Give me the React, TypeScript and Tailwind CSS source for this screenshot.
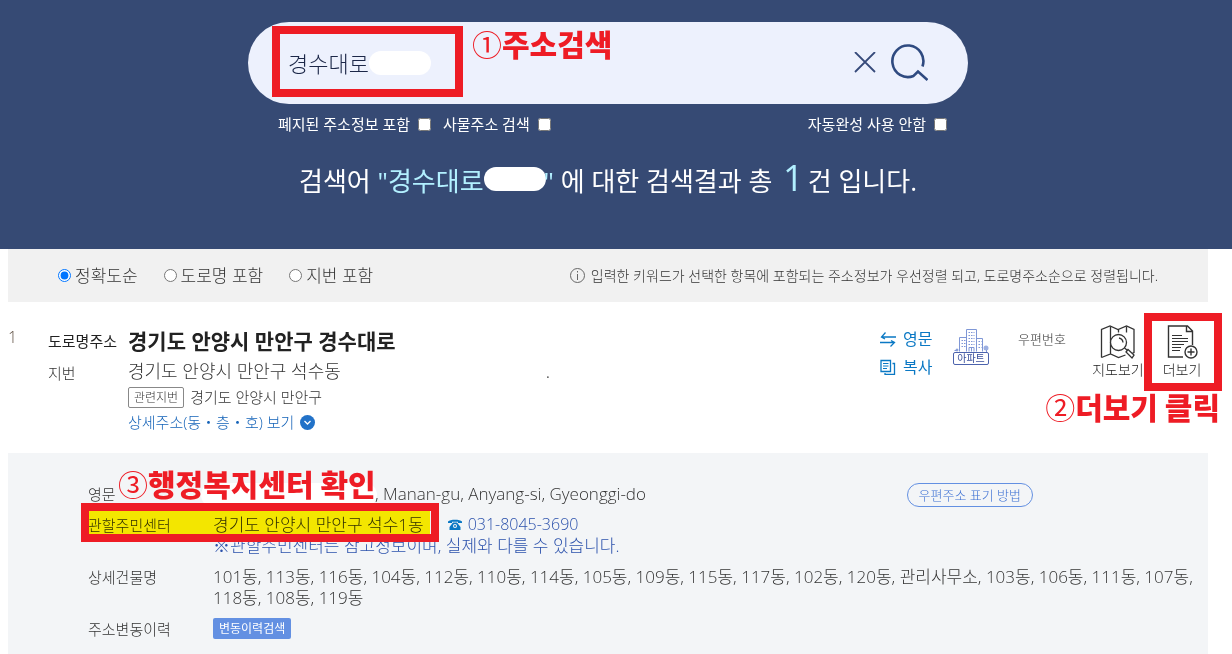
import React, { useState } from "react";
import { clsx } from "clsx";

const buildings =
  "101동, 113동, 116동, 104동, 112동, 110동, 114동, 105동, 109동, 115동, 117동, 102동, 120동, 관리사무소, 103동, 106동, 111동, 107동, 118동, 108동, 119동";

const sortOptions = [
  { id: "accuracy", label: "정확도순" },
  { id: "road", label: "도로명 포함" },
  { id: "jibun", label: "지번 포함" },
];

export default function App() {
  return (
    <div className="min-h-screen bg-white font-['Open_Sans','Noto_Sans_CJK_KR',sans-serif] text-[#333]">
      <SearchHeader />
      <main className="pl-2 pr-6">
        <SortBar />
        <ResultItem />
        <ResultDetail />
      </main>
    </div>
  );
}

function SearchHeader() {
  const [keyword, setKeyword] = useState("경수대로");

  return (
    <header className="bg-[#364a74] pt-[22px] pb-[51px] pl-2 pr-6 text-white">
      <div className="mx-auto max-w-[720px]">
        <form
          className="relative flex h-[82px] items-center rounded-full bg-[#edf1fd] pl-10 pr-10"
          onSubmit={(e) => e.preventDefault()}
        >
          <input
            type="text"
            aria-label="주소 검색어"
            className="min-w-0 flex-1 bg-transparent text-[22px] font-light text-[#1c2748] outline-none"
            value={keyword}
            onChange={(e) => setKeyword(e.target.value)}
          />
          <Mask className="absolute left-[121px] top-[29px]" />
          <button type="button" aria-label="지우기" className="mr-3.5">
            <svg width="22" height="22" viewBox="0 0 22 22" fill="none" stroke="#364a7a" strokeWidth="1.8">
              <path d="M1 0l20 20M21 0L1 20" />
            </svg>
          </button>
          <button type="submit" aria-label="검색">
            <svg width="38" height="38" viewBox="0 0 38 38" fill="none" stroke="#2f4a80" strokeWidth="2.6">
              <path d="M32.500 22.500A15.500 15.800 0 1 0 23.500 32L28 27.500L37.500 36" />
            </svg>
          </button>
          <RedBox className="left-6 top-1 h-[71px] w-[191px]" />
          <Callout no="①" text="주소검색" className="left-56 top-px" />
        </form>
        <div className="flex h-10 items-center gap-3 pl-[30px] pr-[21px] text-[15px]">
          <Check id="closed" label="폐지된 주소정보 포함" />
          <Check id="object" label="사물주소 검색" />
          <Check id="auto" label="자동완성 사용 안함" className="ml-auto" />
        </div>
      </div>
      <h1 className="mt-4 flex h-[38px] items-baseline justify-center whitespace-pre text-[26px] leading-[38px]">
        검색어 <span className="text-[#b2f0ff]">"경수대로</span>
        <Mask className="self-center" />
        <span className="-ml-0.5 text-[#b2f0ff]">"</span> 에 대한 검색결과 총{" "}
        <strong className="mx-1 text-4xl font-normal leading-none text-[#b2f0ff]">1</strong>건 입니다.
      </h1>
    </header>
  );
}

function Check({ id, label, className }: { id: string; label: string; className?: string }) {
  return (
    <span className={clsx("flex items-center gap-2", className)}>
      <label htmlFor={id}>{label}</label>
      <input id={id} type="checkbox" className="size-[13px]" />
    </span>
  );
}

function SortBar() {
  const [sort, setSort] = useState("accuracy");

  return (
    <div className="flex h-[53px] items-center justify-between bg-[#f1f1f1] pl-[50px] pr-[50px]">
      <div className="flex gap-[26px]">
        {sortOptions.map((o) => (
          <label key={o.id} className="flex items-center gap-1 text-[17px] font-light">
            <input
              type="radio"
              name="sort"
              className="size-[13px]"
              checked={sort === o.id}
              onChange={() => setSort(o.id)}
            />
            {o.label}
          </label>
        ))}
      </div>
      <p className="flex items-center gap-1.5 text-sm font-light">
        <svg width="15" height="15" viewBox="0 0 15 15" fill="none" stroke="#666">
          <circle cx="7.500" cy="7.500" r="7" />
          <path d="M7.500 6v6M7.500 3v1.500" />
        </svg>
        입력한 키워드가 선택한 항목에 포함되는 주소정보가 우선정렬 되고, 도로명주소순으로 정렬됩니다.
      </p>
    </div>
  );
}

function ResultItem() {
  return (
    <section className="relative flex pt-[23px] pb-[18px]">
      <span className="w-10 text-base font-light leading-6 text-[#5f5043]">1</span>
      <div className="w-20 text-[15px]">
        <p className="leading-8 text-[#222]">도로명주소</p>
        <p className="font-light leading-8">지번</p>
      </div>
      <div className="flex-1">
        <h2 className="text-[21px] font-bold leading-8 text-[#222]">경기도 안양시 만안구 경수대로</h2>
        <p className="flex max-w-[422px] justify-between text-lg font-light leading-7">
          경기도 안양시 만안구 석수동 <span>.</span>
        </p>
        <p className="flex h-6 items-center gap-1.5 text-[15px] font-light">
          <span className="rounded-xs border border-[#888] px-[5px] text-xs leading-[19px]">관련지번</span>
          경기도 안양시 만안구
        </p>
        <a href="#detail" className="flex h-[26px] items-center gap-1.5 text-[15px] font-light text-[#1563b8]">
          상세주소(동・층・호) 보기
          <svg width="15" height="15" viewBox="0 0 15 15" fill="none">
            <circle cx="7.500" cy="7.500" r="7.500" fill="#2272c8" />
            <path d="M4.500 6l3 3 3-3" stroke="#fff" strokeWidth="1.300" />
          </svg>
        </a>
      </div>
      <div className="w-[73px] text-base text-[#0a78c4]">
        <button type="button" className="flex h-7 items-center gap-[7px]">
          <svg width="16" height="16" viewBox="0 0 16 16" fill="none" stroke="currentColor" strokeWidth="1.300">
            <path d="M16 6H1.500M5.500 1.500L1.500 6l3.500 2M0 11.500H14.500M11 9.500l3.500 2-4 4" />
          </svg>
          영문
        </button>
        <button type="button" className="flex h-7 items-center gap-[7px]">
          <svg width="16" height="16" viewBox="0 0 16 16" fill="none" stroke="currentColor" strokeWidth="1.300">
            <path d="M1 1.500h9.500v11H1zM12.500 4.500h2v11H5v-1.500" />
            <path d="M3 4.500h5.500M3 7h5.500M3 9.500h4" strokeWidth="1" />
          </svg>
          복사
        </button>
      </div>
      <div className="w-[65px] pt-1">
        <ApartmentMark />
      </div>
      <span className="w-[68px] text-[13px] font-light leading-7">우편번호</span>
      <ToolButton label="지도보기">
        <MapIcon />
      </ToolButton>
      <ToolButton label="더보기" className="-mr-1.5">
        <MoreIcon />
      </ToolButton>
      <RedBox className="-right-3.5 top-[11px] h-[78px] w-[78px]" />
      <Callout no="②" text="더보기 클릭" className="-right-3 top-[84px]" />
    </section>
  );
}

function ToolButton({
  label,
  className,
  children,
}: {
  label: string;
  className?: string;
  children: React.ReactNode;
}) {
  return (
    <button
      type="button"
      className={clsx("flex w-16 flex-col items-center self-start text-sm font-light text-[#222]", className)}
    >
      {children}
      {label}
    </button>
  );
}

function ApartmentMark() {
  return (
    <div className="w-9">
      <svg className="block" width="36" height="23" viewBox="0 0 36 23" fill="none" stroke="#7f97d6">
        <path d="M6.500 22.500V8.500H13M13.500 22.500V.5h10v22M23.500 9.500h6v13" />
        <path d="M15.500 3.500h6M15.500 6.500h6M15.500 9.500h6M15.500 12.500h6M15.500 15.500h6" strokeDasharray="1.500 1" />
        <path d="M8.500 11.500h4M8.500 14.500h4M8.500 17.500h4M25.500 12.500h3M25.500 15.500h3M25.500 18.500h3" strokeDasharray="1.500 1" />
        <path d="M16 22.500v-4h5v4M18.500 18.500v4" />
        <circle cx="33" cy="19" r="2.500" fill="#9db0e2" stroke="none" />
        <path d="M33.500 21v2M1.500 21.500h2.500" />
        <circle cx="4" cy="21" r="1" fill="#9db0e2" />
      </svg>
      <span className="block rounded-xs border border-[#4c63ad] text-center text-[10px] leading-[11px] text-[#3a509c]">
        아파트
      </span>
    </div>
  );
}

function MapIcon() {
  return (
    <svg width="36" height="35" viewBox="0 0 36 35" fill="none" stroke="#333" strokeWidth="1.300">
      <path d="M1.500 32.500V4.500l8.500-3.500 8 3.500 8.500-3.500L34 4.500v23l-2 1" />
      <path d="M1.500 32.500l9-3.500 8 3.500 7-2.500M10.500 1.500v27.500M26.500 1.500v6M18.500 4.500v3" />
      <circle cx="18.500" cy="17.500" r="8" fill="#fff" />
      <path d="M19 13a5 5 0 0 1 4 4.500" />
      <path d="M24.500 23l2.500 2M26 27l2-2.500 6 5.500-2 3z" fill="#fff" />
    </svg>
  );
}

function MoreIcon() {
  return (
    <svg width="36" height="35" viewBox="0 0 36 35" fill="none" stroke="#333" strokeWidth="1.400">
      <path d="M19 32H4.500V1h19l5 5v14M22.500 1v5.500H28" />
      <path d="M8 10.500h10M8 13.500h16M8 16.500h16M8 19.500h12M8 22.500h9M8 25.500h8" strokeWidth="1.200" />
      <circle cx="27" cy="27" r="6" fill="#fff" />
      <path d="M27 23.500v7M23.500 27h7" />
    </svg>
  );
}

function ResultDetail() {
  return (
    <section id="detail" className="relative bg-[#f3f5f7] pt-[30px] pb-4 pl-20">
      <dl className="flex flex-col gap-2.5 font-light">
        <DetailRow label="영문">
          <div className="flex items-start">
            {/* hidden building number */}
            <span className="-mb-1 -ml-3 h-6 w-44 flex-none rounded-full bg-white" />
            <span className="-ml-0.5">, Manan-gu, Anyang-si, Gyeonggi-do</span>
            <button
              type="button"
              className="-mb-1 ml-auto mr-[175px] h-6 rounded-full border border-[#6390e2] px-[11px] text-[13px] leading-5 text-[#3f72d4]"
            >
              우편주소 표기 방법
            </button>
          </div>
        </DetailRow>
        <DetailRow label="관할주민센터">
          <p className="flex gap-6">
            경기도 안양시 만안구 석수1동
            <a href="tel:031-8045-3690" className="flex items-center gap-1.5 text-base leading-[21px] text-[#2c52ac]">
              <svg width="14" height="11" viewBox="0 0 14 11" fill="#0a78c4">
                <path d="M0 4V2.500C2 0 12 0 14 2.500V4h-4V2.800H4V4z" />
                <path fillRule="evenodd" d="M5 3.500h4L12.500 8v3h-11V8zM7 5a2 2 0 1 0 0 4 2 2 0 0 0 0-4z" />
                <circle cx="7" cy="7" r="1" />
              </svg>
              031-8045-3690
            </a>
          </p>
          <p className="text-[#2c52ac]">※관할주민센터는 참고정보이며, 실제와 다를 수 있습니다.</p>
        </DetailRow>
        <DetailRow label="상세건물명">
          <p className="max-w-[990px]">{buildings}</p>
        </DetailRow>
        <DetailRow label="주소변동이력">
          <button
            type="button"
            className="block rounded-xs bg-[#6390e2] px-1.5 text-xs font-normal leading-[21px] text-white"
          >
            변동이력검색
          </button>
        </DetailRow>
      </dl>
      <div className="absolute left-[81px] top-[58px] h-[23px] w-[341px] bg-[#fff000] mix-blend-multiply" />
      <RedBox className="left-[73px] top-[50px] h-[39px] w-[358px]" />
      <Callout no="③" text="행정복지센터 확인" className="left-[110px] top-2.5" />
    </section>
  );
}

function DetailRow({ label, children }: { label: string; children: React.ReactNode }) {
  return (
    <div className="flex">
      <dt className="w-[125px] flex-none pt-0.5 text-[15px] leading-[19px]">{label}</dt>
      <dd className="flex-1 text-[17px] leading-[21px]">{children}</dd>
    </div>
  );
}

function Mask({ className }: { className?: string }) {
  return <span className={clsx("h-6 w-[62px] rounded-full bg-white", className)} />;
}

function RedBox({ className }: { className: string }) {
  return <div className={clsx("pointer-events-none absolute border-8 border-[#ee1c25]", className)} />;
}

function Callout({ no, text, className }: { no: string; text: string; className: string }) {
  return (
    <p
      className={clsx(
        "pointer-events-none absolute whitespace-nowrap font-['Noto_Sans_CJK_KR',sans-serif] text-[30px] font-black leading-10 text-[#ee1c25]",
        className
      )}
    >
      <span className="font-normal">{no}</span>
      {text}
    </p>
  );
}
